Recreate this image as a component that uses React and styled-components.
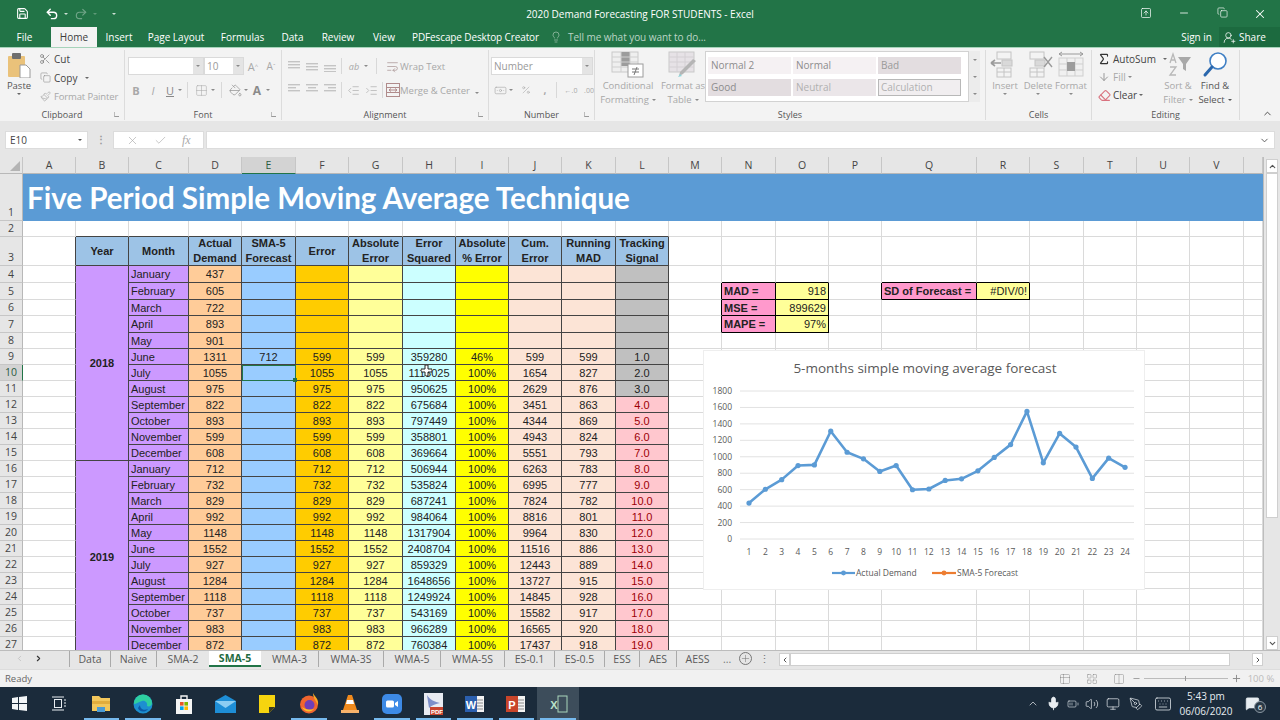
import React from 'react';
import styled, { createGlobalStyle } from 'styled-components';
import {
  Save, Undo2, Redo2, Minus, X, Copy, SquareArrowUp, Lightbulb, UserRoundPlus, Scissors, Paintbrush,
  PaintBucket, Grid2x2, WrapText, Percent, Check, ChevronUp, ChevronDown, Mic, BatteryMedium, Volume2,
  Monitor, PenTool, Keyboard, Plus, ChevronLeft, ChevronRight, Sigma, ArrowDown, Eraser, IndentIncrease,
  IndentDecrease, Banknote, MessageSquare, Table2, LayoutGrid, Columns2,
} from 'lucide-react';

const GlobalStyle = createGlobalStyle`
  html, body { margin: 0; padding: 0; background: #e6e6e6; }
  * { box-sizing: border-box; }
`;

const uiFont = `"Open Sans", "Noto Sans", sans-serif`;
const cellFont = `"Liberation Sans", Arial, sans-serif`;
const green = '#227447';
const faded = '#a8a8a8';

const Page = styled.div`
  width: 1280px;
  height: 720px;
  overflow: hidden;
  display: flex;
  flex-direction: column;
  font-family: ${uiFont};
  font-size: 10px;
  color: #444;
`;

/* title bar */
const TitleBar = styled.div`
  height: 27px;
  flex: none;
  background: ${green};
  color: #fff;
  display: grid;
  grid-template-columns: 1fr auto 1fr;
  align-items: center;
  font-size: 10px;
`;
const Qat = styled.div`
  display: flex;
  align-items: center;
  padding-left: 15px;
`;
const QatSlot = styled.span`
  width: ${p => p.$w}px;
  display: flex;
  justify-content: center;
  align-items: center;
  opacity: ${p => (p.$off ? 0.35 : 1)};
`;
const WindowBtns = styled.div`
  display: flex;
  justify-content: flex-end;
  padding-right: 1px;
`;
const WinBtn = styled.span`
  width: 38px;
  display: flex;
  justify-content: center;
`;
const Caret = styled.i`
  display: inline-block;
  flex: none;
  width: 0;
  height: 0;
  border-left: 2px solid transparent;
  border-right: 2px solid transparent;
  border-top: 2px solid ${p => p.$c || '#8a8a8a'};
`;

/* tabs */
const TabRow = styled.div`
  height: 20px;
  flex: none;
  background: ${green};
  color: #fff;
  display: flex;
  padding-left: 8px;
  gap: 10px;
  position: relative;
`;
const MenuTab = styled.div`
  width: ${p => p.$w}px;
  display: flex;
  align-items: center;
  justify-content: center;
  white-space: nowrap;
  font-size: 10px;
  letter-spacing: ${p => (p.$w > 100 ? '-0.12px' : '0')};
  background: ${p => (p.$on ? '#f3f3f3' : 'transparent')};
  color: ${p => (p.$on ? '#3c3c3c' : '#fff')};
`;
const TellMe = styled.div`
  display: flex;
  align-items: center;
  gap: 6px;
  margin-left: 2px;
  letter-spacing: -0.05px;
  color: #bcd5c6;
  white-space: nowrap;
`;
const Account = styled.div`
  margin-left: auto;
  display: flex;
  align-items: center;
  white-space: nowrap;
`;
const ShareBtn = styled.div`
  width: 61px;
  height: 100%;
  margin-left: 7px;
  background: #1c6a3f;
  display: flex;
  align-items: center;
  gap: 3px;
  padding-left: 4px;
`;

/* ribbon */
const Ribbon = styled.div`
  height: 74px;
  flex: none;
  display: flex;
  background: #f3f3f3;
  border-top: 1px solid #a6d3ba;
  font-size: 9.5px;
`;
const Group = styled.div`
  width: ${p => p.$w}px;
  flex: none;
  position: relative;
  display: flex;
  flex-direction: column;
  border-right: 1px solid #dcdcdc;
  margin: 2px 0 1px;
`;
const GroupBody = styled.div`
  flex: 1;
  display: flex;
  flex-direction: ${p => (p.$col ? 'column' : 'row')};
  gap: ${p => p.$gap || 0}px;
  padding: ${p => p.$pt || 0}px 0 0 ${p => p.$pl || 0}px;
`;
const GroupLabel = styled.div`
  height: 13px;
  text-align: center;
  font-size: 9px;
  line-height: 16px;
  color: #555;
`;
const Launcher = styled.i`
  position: absolute;
  right: 5px;
  bottom: 3px;
  width: 5px;
  height: 5px;
  border-left: 1px solid #bbb;
  border-bottom: 1px solid #999;
`;
const PasteBtn = styled.div`
  width: 38px;
  flex: none;
  display: flex;
  flex-direction: column;
  align-items: center;
  font-size: 9.5px;
  color: #555;
  line-height: 13px;
  gap: 1px;
  padding-top: 1px;
`;
const ClipList = styled.div`
  display: flex;
  flex-direction: column;
  margin-top: -1px;
`;
const ClipRow = styled.div`
  height: 18.5px;
  display: flex;
  align-items: center;
  gap: 2px;
  white-space: nowrap;
  color: ${p => (p.$off ? faded : '#444')};
  font-size: ${p => (p.$off ? 9.5 : 10)}px;
  letter-spacing: ${p => (p.$off ? '-0.15px' : '0')};
`;
const IconBox = styled.span`
  width: ${p => p.$w || 14}px;
  flex: none;
  display: flex;
  align-items: center;
  justify-content: center;
  color: ${p => p.$c || faded};
  font-weight: ${p => (p.$bold ? 700 : 400)};
  font-style: ${p => (p.$it ? 'italic' : 'normal')};
  text-decoration: ${p => (p.$un ? 'underline' : 'none')};
  font-size: ${p => p.$fs || 11}px;
`;
const ToolRow = styled.div`
  height: 18px;
  display: flex;
  align-items: center;
`;
const Combo = styled.div`
  width: ${p => p.$w}px;
  height: 18px;
  flex: none;
  background: #fff;
  border: 1px solid #dadada;
  display: flex;
  align-items: center;
  justify-content: space-between;
  padding-left: 2px;
  color: #999;
  font-size: 10px;
  & > span {
    width: 10px;
    height: 100%;
    background: #e4e4e4;
    display: flex;
    align-items: center;
    justify-content: center;
  }
`;
const Divider = styled.i`
  width: 1px;
  height: 16px;
  flex: none;
  background: #d8d8d8;
  margin: 0 ${p => p.$m || 3}px;
`;
const FadedText = styled.span`
  color: ${faded};
  white-space: nowrap;
  margin-left: ${p => p.$ml || 0}px;
  font-size: 9.5px;
`;
const BigBtn = styled.div`
  width: ${p => p.$w}px;
  flex: none;
  display: flex;
  flex-direction: column;
  align-items: center;
  white-space: nowrap;
  line-height: 14px;
  padding-top: 1px;
  color: ${p => (p.$dark ? '#555' : faded)};
  & > svg { height: 27px; margin-bottom: 1px; flex: none; }
  & > span { display: flex; align-items: center; gap: 3px; }
`;
const Gallery = styled.div`
  width: 264px;
  height: 51px;
  flex: none;
  margin-top: 1px;
  background: #fff;
  border: 1px solid #d2d2d2;
  padding: 5px 2px;
  display: grid;
  grid-template-columns: repeat(3, 83px);
  grid-template-rows: 17px 17px;
  gap: 5px 2px;
`;
const StyleCell = styled.div`
  background: ${p => p.$bg};
  color: ${p => p.$c || '#9a9a9a'};
  border: 1px solid ${p => p.$line || p.$bg};
  font-size: 10px;
  padding-left: 2px;
  line-height: 15px;
`;
const GalleryScroll = styled.div`
  width: 11px;
  height: 51px;
  margin-top: 1px;
  flex: none;
  display: flex;
  flex-direction: column;
  justify-content: space-around;
  align-items: center;
  background: #ececec;
`;
const EditList = styled.div`
  width: 68px;
  padding: 0 0 0 5px;
  flex: none;
  display: flex;
  flex-direction: column;
`;
const EditRow = styled.div`
  height: 18px;
  display: flex;
  align-items: center;
  gap: 2px;
  white-space: nowrap;
  font-size: 10px;
  color: ${p => (p.$off ? faded : '#444')};
`;
const RibbonEnd = styled.div`
  flex: 1;
  display: flex;
  align-items: flex-end;
  justify-content: flex-start;
  padding: 0 0 2px 22px;
`;

/* formula bar */
const FormulaBar = styled.div`
  height: 36px;
  flex: none;
  background: #e6e6e6;
  display: flex;
  padding: 10px 5px 8px;
`;
const NameBox = styled.div`
  width: 83px;
  background: #fff;
  border: 1px solid #dcdcdc;
  display: flex;
  align-items: center;
  justify-content: space-between;
  padding: 0 5px 0 4px;
  font-size: 10px;
  color: #444;
`;
const Dots = styled.div`
  width: 25px;
  text-align: center;
  color: #999;
  line-height: 16px;
  font-weight: 700;
`;
const FxBox = styled.div`
  width: 91px;
  background: #fff;
  border: 1px solid #dcdcdc;
  display: flex;
  align-items: center;
  justify-content: space-around;
  padding: 0 5px;
  color: #aaa;
  font-family: "Liberation Serif", serif;
  font-style: italic;
  font-size: 12px;
`;
const FormulaInput = styled.div`
  flex: 1;
  margin-left: 2px;
  background: #fff;
  border: 1px solid #dcdcdc;
  display: flex;
  align-items: center;
  justify-content: flex-end;
  padding-right: 4px;
`;

/* sheet */
const SheetArea = styled.div`
  height: 493px;
  flex: none;
  display: flex;
  position: relative;
  overflow: hidden;
  background: #fff;
`;
const Grid = styled.div`
  width: 1263px;
  flex: none;
  display: grid;
  grid-template-columns: ${p => p.$cols};
  grid-template-rows: ${p => p.$rows};
  font-family: ${cellFont};
  font-size: 11px;
  color: #222;
`;
const ColHead = styled.div`
  background: ${p => (p.$on ? '#d3d3d3' : '#e6e6e6')};
  border-right: 1px solid #c6c6c6;
  border-bottom: 1px solid ${p => (p.$on ? green : '#b8b8b8')};
  text-align: center;
  line-height: 17px;
  font-family: ${uiFont};
  font-size: 10.5px;
  color: ${p => (p.$on ? '#2a5a40' : '#444')};
`;
const RowHead = styled.div`
  background: ${p => (p.$on ? '#d3d3d3' : '#e6e6e6')};
  border-right: 1px solid ${p => (p.$on ? green : '#b8b8b8')};
  border-bottom: 1px solid #c6c6c6;
  display: flex;
  align-items: flex-end;
  justify-content: center;
  font-family: ${uiFont};
  font-size: 10.5px;
  line-height: 15px;
  color: ${p => (p.$on ? '#2a5a40' : '#444')};
`;
const Corner = styled.div`
  background: #e6e6e6;
  border-right: 1px solid #c6c6c6;
  border-bottom: 1px solid #b8b8b8;
  position: relative;
  &::after {
    content: '';
    position: absolute;
    right: 2px;
    bottom: 2px;
    border-left: 10px solid transparent;
    border-bottom: 10px solid #b4b4b4;
  }
`;
const TitleCell = styled.div`
  grid-column: 2 / -1;
  background: #5b9bd5;
  color: #fff;
  font-family: Lato, "Open Sans", sans-serif;
  font-weight: 700;
  font-size: 29.5px;
  line-height: 47px;
  padding-left: 4px;
  white-space: nowrap;
`;
const Cell = styled.div`
  grid-row: ${p => (p.$span ? `span ${p.$span}` : 'auto')};
  background: ${p => p.$bg || '#fff'};
  color: ${p => p.$c || '#222'};
  font-weight: ${p => (p.$bold ? 700 : 400)};
  text-align: ${p => p.$align || 'center'};
  padding: 0 2px;
  white-space: pre-line;
  display: flex;
  flex-direction: column;
  justify-content: center;
  line-height: ${p => (p.$tall ? '15px' : '14px')};
  border-right: 1px solid ${p => p.$rb || '#dadada'};
  border-bottom: 1px solid ${p => p.$bb || '#dadada'};
  position: relative;
  outline: ${p => (p.$sel ? `1px solid ${green}` : 'none')};
  outline-offset: -1px;
  &::after {
    content: '';
    display: ${p => (p.$sel ? 'block' : 'none')};
    position: absolute;
    right: -2px;
    bottom: -2px;
    width: 4px;
    height: 4px;
    background: ${green};
    z-index: 2;
  }
`;
const CrossCursor = styled.svg`
  position: absolute;
  left: 421px;
  top: 208px;
  z-index: 3;
`;
const VScroll = styled.div`
  flex: 1;
  background: #e6e6e6;
  display: flex;
  flex-direction: column;
  padding: 2px 2px 0;
  border-left: 1px solid #bdbdbd;
`;
const ScrollBtn = styled.div`
  height: 14px;
  flex: none;
  background: #fff;
  border: 1px solid #cfcfcf;
  color: #555;
  display: flex;
  align-items: center;
  justify-content: center;
`;
const VThumb = styled.div`
  height: 345px;
  flex: none;
  background: #fff;
  border: 1px solid #cfcfcf;
`;
const Spacer = styled.div`
  flex: 1;
`;
const ChartBox = styled.div`
  position: absolute;
  left: 703px;
  top: 193px;
  width: 442px;
  height: 240px;
  background: #fff;
  border: 1px solid #eeeeee;
  z-index: 2;
  & text { font-family: ${uiFont}; fill: #595959; }
`;

/* sheet tabs + status */
const SheetTabs = styled.div`
  height: 19px;
  flex: none;
  background: #e6e6e6;
  border-top: 1px solid #bcbcbc;
  display: flex;
  font-size: 10.5px;
  color: #5a5a5a;
`;
const TabNav = styled.div`
  width: 69px;
  flex: none;
  display: flex;
  align-items: center;
  padding: 0 0 3px 15px;
  gap: 10px;
`;
const SheetTab = styled.div`
  width: ${p => p.$w}px;
  height: 16px;
  flex: none;
  display: flex;
  align-items: center;
  justify-content: center;
  white-space: nowrap;
  border-left: ${p => (p.$sep ? '1px solid #aaa' : 'none')};
  background: ${p => (p.$on ? '#fff' : 'transparent')};
  color: ${p => (p.$on ? '#1f6b41' : 'inherit')};
  font-weight: ${p => (p.$on ? 700 : 400)};
  border-bottom: ${p => (p.$on ? `2px solid ${green}` : 'none')};
`;
const TabTools = styled.div`
  width: 61px;
  flex: none;
  display: flex;
  align-items: center;
  justify-content: space-between;
  padding: 0 9px 3px 5px;
  color: #777;
  & > svg {
    border: 1px solid #777;
    border-radius: 50%;
  }
`;
const HScroll = styled.div`
  flex: 1;
  display: flex;
  align-items: stretch;
  padding: 2px 17px 3px 0;
  & > * { flex: none; }
`;
const HBtn = styled.div`
  width: 11px;
  background: #fff;
  border: 1px solid #cfcfcf;
  display: flex;
  align-items: center;
  justify-content: center;
  color: #555;
`;
const HThumb = styled.div`
  width: 440px;
  background: #fff;
  border: 1px solid #cfcfcf;
  margin-right: auto;
`;
const StatusBar = styled.div`
  height: 18px;
  flex: none;
  background: #f1f1f1;
  border-top: 1px solid #dcdcdc;
  display: flex;
  align-items: center;
  padding-left: 5px;
  font-size: 9.5px;
  color: #666;
`;
const StatusRight = styled.div`
  margin-left: auto;
  display: flex;
  align-items: center;
  color: #888;
`;
const ViewIcon = styled.span`
  width: 27px;
  display: flex;
  justify-content: center;
`;
const ZoomTrack = styled.div`
  width: 84px;
  height: 1px;
  margin: 0 3px;
  background: #bbb;
  position: relative;
  &::after {
    content: '';
    position: absolute;
    left: 41px;
    top: -2px;
    width: 1px;
    height: 5px;
    background: #999;
  }
`;
const ZoomLabel = styled.span`
  width: 38px;
  text-align: center;
  color: #bbb;
`;

/* taskbar */
const Taskbar = styled.div`
  flex: 1;
  background: #1b2b3b;
  display: flex;
  align-items: stretch;
  color: #e8edf1;
`;
const TaskSlot = styled.div`
  width: ${p => p.$w || 41.5}px;
  flex: none;
  display: flex;
  align-items: center;
  justify-content: center;
  position: relative;
  background: ${p => (p.$active ? '#3d4d5b' : 'transparent')};
  &::after {
    content: '';
    display: ${p => (p.$open ? 'block' : 'none')};
    position: absolute;
    left: 3px;
    right: 3px;
    bottom: 0;
    height: 2px;
    background: #76b9ed;
  }
`;
const Tray = styled.div`
  margin-left: auto;
  display: flex;
  align-items: center;
  padding-right: 13px;
`;
const TraySlot = styled.span`
  width: ${p => p.$w}px;
  flex: none;
  display: flex;
  justify-content: center;
`;
const Clock = styled.div`
  width: 62px;
  text-align: center;
  font-size: 10px;
  line-height: 15px;
`;
const Notify = styled.div`
  width: 30px;
  display: flex;
  justify-content: center;
  position: relative;
`;
const NotifyBadge = styled.span`
  position: absolute;
  left: 17px;
  top: 5px;
  width: 12px;
  height: 12px;
  border-radius: 50%;
  background: #2a3a48;
  border: 1px solid #8b98a3;
  font-size: 8px;
  line-height: 10px;
  text-align: center;
  color: #fff;
`;

/* drawings */
const PasteIcon = () => (
  <svg width="24" height="26" viewBox="0 0 24 26">
    <rect x="1" y="4" width="17" height="21" rx="1" fill="#eac27a" />
    <rect x="5" y="1" width="9" height="6" rx="1" fill="#6f6f6f" />
    <path d="M13 13h6l4 4v9H13z" fill="#fff" stroke="#9a9a9a" />
  </svg>
);
const LinesIcon = ({ top = 0, align = 'left' }) => {
  const rows = [0, 1, 2];
  return (
    <svg width="14" height="12" viewBox="0 0 14 12">
      {rows.map(i => {
        const w = i === 1 ? 8 : 12;
        const x = align === 'left' ? 1 : align === 'center' ? 7 - w / 2 : 13 - w;
        return <rect key={i} x={top ? 1 : x} y={top + i * 3} width={top ? 12 : w} height="1.4" fill="#c4c4c4" />;
      })}
    </svg>
  );
};
const MergeIcon = () => (
  <svg width="14" height="14" viewBox="0 0 14 14" fill="none" stroke="#b08b8b">
    <rect x="0.5" y="0.5" width="13" height="13" />
    <path d="M0 4.5h14M0 9.5h14M3 7h8M3 7l2-1.5M3 7l2 1.5M11 7L9 5.5M11 7L9 8.5" />
  </svg>
);
const CondIcon = () => (
  <svg width="36" height="27" viewBox="0 0 36 27" fill="none">
    <rect x="2" y="1" width="26" height="20" fill="#efefef" stroke="#c9c9c9" />
    <rect x="11" y="1" width="9" height="14" fill="#9c9c9c" />
    <path d="M2 6h26M2 11h26M2 16h26M11 1v20M20 1v20" stroke="#cfcfcf" />
    <rect x="18" y="13" width="15" height="13" fill="#fff" stroke="#9c9c9c" />
    <path d="M22 18h7M22 21h7M27 16l-3 8" stroke="#777" />
  </svg>
);
const TableIcon = () => (
  <svg width="30" height="27" viewBox="0 0 30 27" fill="none">
    <rect x="1" y="1" width="25" height="20" fill="#e6e2e6" stroke="#c9c9c9" />
    <path d="M1 6h25M1 11h25M1 16h25M9 1v20M17 1v20" stroke="#d4d0d4" />
    <path d="M28 10L15 23l-4 2 1-4L25 8z" fill="#b5b5b5" />
    <path d="M12 23l-2 3 4-1z" fill="#8fd3d8" />
  </svg>
);
const InsertIcon = ({ kind }) => (
  <svg width="32" height="27" viewBox="0 0 32 27" fill="none" stroke="#c4c4c4">
    <rect x="8" y="1" width="14" height="7" />
    <rect x="8" y="17" width="14" height="9" />
    <path d="M15 17v9M8 21h14" />
    <rect x="13" y="9" width="10" height="6" fill="#d9d9d9" />
    {kind === 'insert'
      ? <path d="M2 12h10M2 12l4-3M2 12l4 3" stroke="#9b9b9b" strokeWidth="1.6" />
      : <path d="M22 6l8 10M30 6l-8 10" stroke="#9b9b9b" strokeWidth="1.4" />}
  </svg>
);
const FormatIcon = () => (
  <svg width="30" height="27" viewBox="0 0 30 27" fill="none" stroke="#cfcfcf">
    <path d="M3 3h24M3 3l3-2M3 3l3 2M27 3l-3-2M27 3l-3 2" stroke="#999" />
    <rect x="3" y="7" width="24" height="18" fill="#f0f0f0" />
    <path d="M3 13h24M3 19h24M11 7v18M19 7v18" />
    <rect x="11" y="11" width="8" height="9" fill="#9c9c9c" stroke="none" />
  </svg>
);
const SortIcon = () => (
  <svg width="30" height="27" viewBox="0 0 30 27" fill="none">
    <path d="M7 12l3-9 3 9M8 9h4M7 16h6l-6 8h6" stroke="#b8b8b8" strokeWidth="1.3" />
    <path d="M15 6h13l-5 7v7l-3-2v-5z" fill="#a9a9a9" />
  </svg>
);
const FindIcon = () => (
  <svg width="26" height="27" viewBox="0 0 26 27" fill="none">
    <circle cx="16" cy="10" r="8" stroke="#3f7fc4" strokeWidth="1.6" fill="#fff" />
    <path d="M10 16L3 24" stroke="#2a67ad" strokeWidth="3" strokeLinecap="round" />
  </svg>
);
const WinLogo = () => (
  <svg width="15" height="15" viewBox="0 0 15 15" fill="#f2f5f7">
    <path d="M0 2l6-1v6H0zM7 1l8-1v7H7zM0 8h6v6l-6-1zM7 8h8v7l-8-1z" />
  </svg>
);
const TaskView = () => (
  <svg width="15" height="15" viewBox="0 0 15 15" fill="none" stroke="#e8edf1">
    <rect x="2.5" y="3.5" width="7" height="8" />
    <path d="M0 1h12M0 14h12M12 4h2M12 7h2M12 10h2" />
  </svg>
);
const Folder = () => (
  <svg width="20" height="18" viewBox="0 0 20 18">
    <path d="M1 1h7l2 2h9v13H1z" fill="#f2c75c" />
    <path d="M1 6h18v3H1z" fill="#e2ad3d" />
    <path d="M6 12h8v5H6z" fill="#4b9bd5" />
  </svg>
);
const Edge = () => (
  <svg width="20" height="20" viewBox="0 0 20 20">
    <circle cx="10" cy="10" r="9.5" fill="#1d8fd0" />
    <path d="M1 10a9 9 0 0 1 18-1c0 3-3 4-5 3 1-3-2-6-5-5-4 1-6 3-8 3z" fill="#2ecfa0" />
    <path d="M7 11c0 4 4 6 8 4-3 4-9 3-10-1z" fill="#0c5aa6" />
  </svg>
);
const Store = () => (
  <svg width="20" height="20" viewBox="0 0 20 20">
    <path d="M2 5h16v15H2z" fill="#f5f5f5" />
    <path d="M7 5V2h6v3" fill="none" stroke="#f5f5f5" strokeWidth="1.4" />
    <rect x="6" y="8" width="3.6" height="3.6" fill="#e8572a" />
    <rect x="10.4" y="8" width="3.6" height="3.6" fill="#7fba00" />
    <rect x="6" y="12.4" width="3.6" height="3.6" fill="#00a4ef" />
    <rect x="10.4" y="12.4" width="3.6" height="3.6" fill="#ffb900" />
  </svg>
);
const Mail = () => (
  <svg width="21" height="18" viewBox="0 0 21 18">
    <path d="M0 6L10.5 0 21 6v12H0z" fill="#1e8ed6" />
    <path d="M0 6l10.5 7L21 6" fill="#8ccdf2" />
  </svg>
);
const Sticky = () => (
  <svg width="16" height="18" viewBox="0 0 16 18">
    <path d="M0 0h16v12l-6 6H0z" fill="#f6d40f" />
    <path d="M10 18v-6h6z" fill="#3a3a20" />
  </svg>
);
const Firefox = () => (
  <svg width="20" height="21" viewBox="0 0 20 21">
    <circle cx="10" cy="11.5" r="9" fill="#f0652f" />
    <circle cx="10.5" cy="12" r="5" fill="#6e3fb8" />
    <path d="M14 0c2 4 6 6 5 12-2-4-5-7-5-12z" fill="#f9a825" />
    <path d="M3 14c2 5 9 6 12 2-3 1-8 1-12-2z" fill="#f9c02e" />
  </svg>
);
const Vlc = () => (
  <svg width="18" height="20" viewBox="0 0 18 20">
    <path d="M7 1h4l5 15H2z" fill="#f08a1d" />
    <path d="M6 6h6l1 4H5z" fill="#fff" />
    <path d="M0 16h18v3H0z" fill="#f6b26b" />
  </svg>
);
const ZoomApp = () => (
  <svg width="20" height="20" viewBox="0 0 20 20">
    <rect width="20" height="20" rx="5" fill="#3d8ae6" />
    <rect x="4" y="6.5" width="8" height="7" rx="1.5" fill="#fff" />
    <path d="M13 9l3-2v6l-3-2z" fill="#fff" />
  </svg>
);
const PdfApp = () => (
  <svg width="19" height="22" viewBox="0 0 19 22">
    <rect width="19" height="22" fill="#e8ebf2" />
    <path d="M3 2c3 5 8 7 13 8-4 1-8 2-11 5z" fill="#7d8fc9" />
    <rect x="6" y="14" width="13" height="8" fill="#c9452f" />
    <text x="7" y="20.5" fontSize="6" fontWeight="700" fill="#fff" fontFamily="Liberation Sans">PDF</text>
  </svg>
);
const OfficeApp = ({ bg, letter }) => (
  <svg width="20" height="20" viewBox="0 0 20 20">
    <rect x="10" y="2" width="9" height="16" fill={bg === 'none' ? 'none' : '#f3f3f3'} stroke={bg === 'none' ? '#a9d6bb' : 'none'} />
    <path d="M12 6h6M12 9h6M12 12h6M12 15h6" stroke={bg === 'none' ? 'none' : '#8a8a8a'} />
    {bg !== 'none' && <rect x="0" y="2" width="12" height="16" fill={bg} />}
    <text x="6" y="14.5" textAnchor="middle" fontSize="11" fontWeight="700" fill={bg === 'none' ? '#b9e3c9' : '#fff'} fontFamily="Liberation Sans">{letter}</text>
  </svg>
);

/* sheet data */
const colWidths = [23, 53, 53, 60, 53, 54, 53, 54, 53, 53, 53, 54, 53, 53, 54, 53, 53, 95, 53, 54, 53, 53, 54, 19];
const letters = 'ABCDEFGHIJKLMNOPQRSTUVW'.split('');
const rowHeights = [17, 47, 16, 29, 17, 17, 16, 17, 16, ...Array(19).fill(16)];
const lineDark = '#444';
const lineBlack = '#000';

const firstMonths = [['January', 437], ['February', 605], ['March', 722], ['April', 893], ['May', 901]];
// month, demand, squared, cum, mad, signal (error = demand from row 10 on)
const dataRows = [
  ['June', 1311, 359280, 599, 599, '1.0'],
  ['July', 1055, 1113025, 1654, 827, '2.0'],
  ['August', 975, 950625, 2629, 876, '3.0'],
  ['September', 822, 675684, 3451, 863, '4.0'],
  ['October', 893, 797449, 4344, 869, '5.0'],
  ['November', 599, 358801, 4943, 824, '6.0'],
  ['December', 608, 369664, 5551, 793, '7.0'],
  ['January', 712, 506944, 6263, 783, '8.0'],
  ['February', 732, 535824, 6995, 777, '9.0'],
  ['March', 829, 687241, 7824, 782, '10.0'],
  ['April', 992, 984064, 8816, 801, '11.0'],
  ['May', 1148, 1317904, 9964, 830, '12.0'],
  ['June', 1552, 2408704, 11516, 886, '13.0'],
  ['July', 927, 859329, 12443, 889, '14.0'],
  ['August', 1284, 1648656, 13727, 915, '15.0'],
  ['September', 1118, 1249924, 14845, 928, '16.0'],
  ['October', 737, 543169, 15582, 917, '17.0'],
  ['November', 983, 966289, 16565, 920, '18.0'],
  ['December', 872, 760384, 17437, 918, '19.0'],
];
const headers = {
  B: 'Year', C: 'Month', D: 'Actual\nDemand', E: 'SMA-5\nForecast', F: 'Error', G: 'Absolute\nError',
  H: 'Error\nSquared', I: 'Absolute\n% Error', J: 'Cum.\nError', K: 'Running\nMAD', L: 'Tracking\nSignal',
};
const tones = {
  C: '#cc99ff', D: '#ffcc99', E: '#99ccff', F: '#ffcc00', G: '#ffff99', H: '#ccffff', I: '#ffff00', J: '#fce4d6', K: '#fce4d6', L: '#c0c0c0',
};
const tableCols = 'BCDEFGHIJKL';
const statCells = {
  N5: ['MAD =', 'l'], O5: ['918', 'r'], N6: ['MSE =', 'l'], O6: ['899629', 'r'], N7: ['MAPE =', 'l'], O7: ['97%', 'r'],
  Q5: ['SD of Forecast =', 'l'], R5: ['#DIV/0!', 'r'],
};

function cellValue(col, row) {
  if (row < 4) return '';
  if (row <= 8) {
    const m = firstMonths[row - 4];
    return col === 'C' ? m[0] : col === 'D' ? m[1] : '';
  }
  const [month, demand, squared, cum, mad, signal] = dataRows[row - 9];
  const first = row === 9;
  switch (col) {
    case 'C': return month;
    case 'D': return demand;
    case 'E': return first ? 712 : '';
    case 'F':
    case 'G': return first ? 599 : demand;
    case 'H': return squared;
    case 'I': return first ? '46%' : '100%';
    case 'J': return cum;
    case 'K': return mad;
    case 'L': return signal;
    default: return '';
  }
}

function SheetCell({ col, row }) {
  const key = col + row;
  if (col === 'B' && row >= 4) {
    if (row !== 4 && row !== 16) return null;
    return (
      <Cell $span={12} $bg="#cc99ff" $bold $rb={lineDark} $bb={lineDark}>
        {row === 4 ? 2018 : 2019}
      </Cell>
    );
  }
  if (row === 3 && headers[col]) {
    return <Cell $bg="#9dc3e6" $bold $tall $rb={lineDark} $bb={lineDark}>{headers[col]}</Cell>;
  }
  if (row >= 4 && tableCols.includes(col)) {
    const red = col === 'L' && row >= 12;
    return (
      <Cell
        $bg={red ? '#ffc7ce' : tones[col]}
        $c={red ? '#9c0006' : undefined}
        $align={col === 'C' ? 'left' : 'center'}
        $rb={lineDark}
        $bb={lineDark}
        $sel={key === 'E10'}
      >
        {cellValue(col, row)}
      </Cell>
    );
  }
  if (statCells[key]) {
    const [text, side] = statCells[key];
    return (
      <Cell
        $bg={side === 'l' ? '#ff99cc' : '#ffff99'}
        $bold={side === 'l'}
        $align={side === 'l' ? 'left' : 'right'}
        $rb={lineBlack}
        $bb={lineBlack}
      >
        {text}
      </Cell>
    );
  }
  // neighbours carry the dark edge of a table
  const edgeRight = (col === 'A' && row >= 3) || (row >= 5 && row <= 7 && col === 'M') || (row === 5 && col === 'P');
  const edgeBottom = (row === 2 && tableCols.includes(col)) || (row === 4 && 'NOQR'.includes(col));
  return <Cell $rb={edgeRight ? (col === 'A' ? lineDark : lineBlack) : undefined} $bb={edgeBottom ? (row === 2 ? lineDark : lineBlack) : undefined} />;
}

const demand = [437, 605, 722, 893, 901, 1311, 1055, 975, 822, 893, 599, 608, 712, 732, 829, 992, 1148, 1552, 927, 1284, 1118, 737, 983, 872];
const px = i => 45 + i * 16.35;
const py = v => 188 - (v * 148) / 1800;

function Chart() {
  const pts = demand.map((v, i) => `${px(i)},${py(v)}`).join(' ');
  return (
    <ChartBox>
      <svg width="440" height="238" viewBox="0 0 440 238">
        <text x="221" y="22" textAnchor="middle" fontSize="13.5">5-months simple moving average forecast</text>
        {[0, 200, 400, 600, 800, 1000, 1200, 1400, 1600, 1800].map(v => (
          <g key={v}>
            <line x1="36" x2="430" y1={py(v)} y2={py(v)} stroke="#e2e2e2" />
            <text x="28" y={py(v) + 3} textAnchor="end" fontSize="8.5">{v}</text>
          </g>
        ))}
        {demand.map((_, i) => (
          <text key={i} x={px(i)} y="204" textAnchor="middle" fontSize="8.5">{i + 1}</text>
        ))}
        <polyline points={pts} fill="none" stroke="#5b9bd5" strokeWidth="2.6" strokeLinejoin="round" />
        {demand.map((v, i) => <circle key={i} cx={px(i)} cy={py(v)} r="2.6" fill="#5b9bd5" />)}
        <line x1="128" x2="151" y1="222" y2="222" stroke="#5b9bd5" strokeWidth="2.2" />
        <circle cx="139.5" cy="222" r="2.4" fill="#5b9bd5" />
        <text x="152" y="225" fontSize="8.5">Actual Demand</text>
        <line x1="228" x2="252" y1="222" y2="222" stroke="#ed7d31" strokeWidth="2.2" />
        <circle cx="240" cy="222" r="2.4" fill="#ed7d31" />
        <text x="253" y="225" fontSize="8.5">SMA-5 Forecast</text>
      </svg>
    </ChartBox>
  );
}

function Sheet() {
  const rows = rowHeights.slice(1).map((_, i) => i + 1);
  return (
    <SheetArea>
      <Grid
        $cols={colWidths.map(w => `${w}px`).join(' ')}
        $rows={rowHeights.map(h => `${h}px`).join(' ')}
      >
        <Corner />
        {letters.map(l => <ColHead key={l} $on={l === 'E'}>{l !== 'W' ? l : ''}</ColHead>)}
        {rows.map(row => (
          <React.Fragment key={row}>
            <RowHead $on={row === 10}>{row}</RowHead>
            {row === 1
              ? <TitleCell>Five Period Simple Moving Average Technique</TitleCell>
              : letters.map(col => <SheetCell key={col} col={col} row={row} />)}
          </React.Fragment>
        ))}
      </Grid>
      <VScroll>
        <ScrollBtn><ChevronUp size={9} strokeWidth={3} /></ScrollBtn>
        <VThumb />
        <Spacer />
        <ScrollBtn><ChevronDown size={9} strokeWidth={3} /></ScrollBtn>
      </VScroll>
      <Chart />
      <CrossCursor width="11" height="11" viewBox="0 0 11 11">
        <path d="M4 0h3v4h4v3H7v4H4V7H0V4h4z" fill="#fff" stroke="#222" />
      </CrossCursor>
    </SheetArea>
  );
}

const menuTabs = [
  ['File', 33], ['Home', 46, true], ['Insert', 24], ['Page Layout', 70], ['Formulas', 43],
  ['Data', 37], ['Review', 34], ['View', 38], ['PDFescape Desktop Creator', 125],
];
const sheetTabs = [
  ['Data', 41], ['Naive', 46], ['SMA-2', 53], ['SMA-5', 52, true], ['WMA-3', 57], ['WMA-3S', 65], ['WMA-5', 57],
  ['WMA-5S', 64], ['ES-0.1', 50], ['ES-0.5', 50], ['ESS', 35], ['AES', 37], ['AESS', 42],
];

function Clipboard() {
  return (
    <Group $w={125}>
      <GroupBody $pt={1}>
        <PasteBtn>
          <PasteIcon />
          Paste
          <Caret $c="#666" />
        </PasteBtn>
        <ClipList>
          <ClipRow><IconBox $c="#666"><Scissors size={12} strokeWidth={1.2} /></IconBox>Cut</ClipRow>
          <ClipRow><IconBox $c="#888"><Copy size={11} strokeWidth={1.2} /></IconBox>Copy&nbsp;&nbsp;<Caret $c="#666" /></ClipRow>
          <ClipRow $off><IconBox $c="#bbb"><Paintbrush size={11} /></IconBox>Format Painter</ClipRow>
        </ClipList>
      </GroupBody>
      <GroupLabel>Clipboard</GroupLabel>
      <Launcher />
    </Group>
  );
}

function FontGroup() {
  return (
    <Group $w={157}>
      <GroupBody $col $pt={7} $pl={3} $gap={6}>
        <ToolRow>
          <Combo $w={76}><b /><span><Caret /></span></Combo>
          <Combo $w={40}>10<span><Caret /></span></Combo>
          <IconBox $w={18} $fs={11}>A<sup style={{ fontSize: 6 }}>^</sup></IconBox>
          <IconBox $w={18} $fs={10}>A<sup style={{ fontSize: 6 }}>ˇ</sup></IconBox>
        </ToolRow>
        <ToolRow>
          <IconBox $w={16} $bold>B</IconBox>
          <IconBox $w={18} $it $fs={11}>I</IconBox>
          <IconBox $w={16} $un $c="#888">U</IconBox>
          <Caret />
          <Divider $m={5} />
          <IconBox $w={16}><Grid2x2 size={13} strokeWidth={1} /></IconBox>
          <IconBox $w={8}><Caret /></IconBox>
          <Divider $m={4} />
          <IconBox $w={18} $c="#888"><PaintBucket size={13} strokeWidth={1.2} /></IconBox>
          <Caret />
          <IconBox $w={18} $c="#8a8a8a" $bold $fs={12}>A</IconBox>
          <Caret />
        </ToolRow>
      </GroupBody>
      <GroupLabel>Font</GroupLabel>
      <Launcher />
    </Group>
  );
}

function Alignment() {
  return (
    <Group $w={207}>
      <GroupBody $col $pt={7} $pl={3} $gap={6}>
        <ToolRow>
          <IconBox $w={18}><LinesIcon top={1} /></IconBox>
          <IconBox $w={18}><LinesIcon top={3} /></IconBox>
          <IconBox $w={18}><LinesIcon top={5} /></IconBox>
          <Divider $m={2} />
          <IconBox $w={20} $fs={9} $it>ab</IconBox>
          <Caret />
          <Divider $m={8} />
          <IconBox $w={15} $c="#a08a8a"><WrapText size={13} strokeWidth={1.2} /></IconBox>
          <FadedText>Wrap Text</FadedText>
        </ToolRow>
        <ToolRow>
          <IconBox $w={18}><LinesIcon align="left" /></IconBox>
          <IconBox $w={18}><LinesIcon align="center" /></IconBox>
          <IconBox $w={18}><LinesIcon align="right" /></IconBox>
          <Divider $m={2} />
          <IconBox $w={18}><IndentDecrease size={13} strokeWidth={1.2} /></IconBox>
          <IconBox $w={18}><IndentIncrease size={13} strokeWidth={1.2} /></IconBox>
          <Divider $m={2} />
          <IconBox $w={15}><MergeIcon /></IconBox>
          <FadedText>Merge &amp; Center</FadedText>
          <FadedText $ml={5}><Caret /></FadedText>
        </ToolRow>
      </GroupBody>
      <GroupLabel>Alignment</GroupLabel>
      <Launcher />
    </Group>
  );
}

function NumberGroup() {
  return (
    <Group $w={106}>
      <GroupBody $col $pt={7} $pl={2} $gap={6}>
        <ToolRow><Combo $w={102}>Number<span><Caret /></span></Combo></ToolRow>
        <ToolRow>
          <IconBox $w={18}><Banknote size={13} strokeWidth={1.2} /></IconBox>
          <Caret />
          <IconBox $w={26}><Percent size={10} strokeWidth={1.4} /></IconBox>
          <IconBox $w={12} $bold $fs={10}>,</IconBox>
          <Divider $m={5} />
          <IconBox $w={18} $fs={7}>←.0</IconBox>
          <IconBox $w={18} $fs={7}>.00</IconBox>
        </ToolRow>
      </GroupBody>
      <GroupLabel>Number</GroupLabel>
      <Launcher />
    </Group>
  );
}

function Styles() {
  return (
    <Group $w={391}>
      <GroupBody>
        <BigBtn $w={66}>
          <CondIcon />
          Conditional
          <span>Formatting <Caret /></span>
        </BigBtn>
        <BigBtn $w={44}>
          <TableIcon />
          Format as
          <span>Table <Caret /></span>
        </BigBtn>
        <Gallery>
          <StyleCell $bg="#f5f1f3" $c="#8c8c8c">Normal 2</StyleCell>
          <StyleCell $bg="#f5f1f3" $c="#8c8c8c">Normal</StyleCell>
          <StyleCell $bg="#e3dde0">Bad</StyleCell>
          <StyleCell $bg="#e3dde0" $c="#8c8c8c">Good</StyleCell>
          <StyleCell $bg="#ebe6e9" $c="#b0b0b0">Neutral</StyleCell>
          <StyleCell $bg="#f1eef0" $line="#b8b8b8" $c="#b0b0b0">Calculation</StyleCell>
        </Gallery>
        <GalleryScroll><Caret /><Caret /><Caret /></GalleryScroll>
      </GroupBody>
      <GroupLabel>Styles</GroupLabel>
    </Group>
  );
}

function Cells() {
  return (
    <Group $w={106}>
      <GroupBody>
        <BigBtn $w={38}><InsertIcon kind="insert" />Insert<span><Caret /></span></BigBtn>
        <BigBtn $w={28}><InsertIcon kind="delete" />Delete<span><Caret /></span></BigBtn>
        <BigBtn $w={38}><FormatIcon />Format<span><Caret /></span></BigBtn>
      </GroupBody>
      <GroupLabel>Cells</GroupLabel>
    </Group>
  );
}

function Editing() {
  return (
    <Group $w={148}>
      <GroupBody>
        <EditList>
          <EditRow><IconBox $c="#333"><Sigma size={14} /></IconBox>AutoSum&nbsp;&nbsp;<Caret $c="#666" /></EditRow>
          <EditRow $off><IconBox $c="#999"><ArrowDown size={12} /></IconBox>Fill <Caret /></EditRow>
          <EditRow><IconBox $c="#d9727f"><Eraser size={13} /></IconBox>Clear <Caret $c="#666" /></EditRow>
        </EditList>
        <BigBtn $w={36}>
          <SortIcon />
          Sort &amp;
          <span>Filter <Caret /></span>
        </BigBtn>
        <BigBtn $w={38} $dark>
          <FindIcon />
          Find &amp;
          <span>Select <Caret $c="#555" /></span>
        </BigBtn>
      </GroupBody>
      <GroupLabel>Editing</GroupLabel>
    </Group>
  );
}

export default function App() {
  return (
    <Page>
      <GlobalStyle />
      <TitleBar>
        <Qat>
          <QatSlot $w={14}><Save size={13} /></QatSlot>
          <QatSlot $w={15} />
          <QatSlot $w={16}><Undo2 size={14} strokeWidth={2.4} /></QatSlot>
          <QatSlot $w={12}><Caret $c="#cde0d5" /></QatSlot>
          <QatSlot $w={18} $off><Redo2 size={14} /></QatSlot>
          <QatSlot $w={10} $off><Caret $c="#cde0d5" /></QatSlot>
          <QatSlot $w={28}><Caret $c="#cde0d5" /></QatSlot>
        </Qat>
        <span>2020 Demand Forecasting FOR STUDENTS - Excel</span>
        <WindowBtns>
          <WinBtn><SquareArrowUp size={12} strokeWidth={1.4} /></WinBtn>
          <WinBtn><Minus size={12} strokeWidth={1.6} /></WinBtn>
          <WinBtn><Copy size={11} strokeWidth={1.4} /></WinBtn>
          <WinBtn><X size={14} strokeWidth={1.8} /></WinBtn>
        </WindowBtns>
      </TitleBar>
      <TabRow>
        {menuTabs.map(([name, w, on]) => <MenuTab key={name} $w={w} $on={on}>{name}</MenuTab>)}
        <TellMe><Lightbulb size={12} strokeWidth={1.2} />Tell me what you want to do...</TellMe>
        <Account>
          Sign in
          <ShareBtn><UserRoundPlus size={13} strokeWidth={1.4} />Share</ShareBtn>
        </Account>
      </TabRow>
      <Ribbon>
        <Clipboard />
        <FontGroup />
        <Alignment />
        <NumberGroup />
        <Styles />
        <Cells />
        <Editing />
        <RibbonEnd><ChevronUp size={11} /></RibbonEnd>
      </Ribbon>
      <FormulaBar>
        <NameBox>E10<Caret $c="#555" /></NameBox>
        <Dots>⋮</Dots>
        <FxBox><X size={13} strokeWidth={1.2} /><Check size={13} strokeWidth={1.2} />fx</FxBox>
        <FormulaInput><ChevronDown size={11} color="#555" /></FormulaInput>
      </FormulaBar>
      <Sheet />
      <SheetTabs>
        <TabNav><ChevronLeft size={9} color="#bbb" /><ChevronRight size={9} strokeWidth={3} color="#333" /></TabNav>
        {sheetTabs.map(([name, w, on], i) => (
          <SheetTab key={name} $w={w} $on={on} $sep={i === 0 || (!on && !sheetTabs[i - 1][2])}>{name}</SheetTab>
        ))}
        <TabTools>
          <span>...</span>
          <Plus size={13} strokeWidth={1.2} />
          <span>⋮</span>
        </TabTools>
        <HScroll>
          <HBtn><ChevronLeft size={8} strokeWidth={3} /></HBtn>
          <HThumb />
          <HBtn><ChevronRight size={8} strokeWidth={3} /></HBtn>
        </HScroll>
      </SheetTabs>
      <StatusBar>
        Ready
        <StatusRight>
          <ViewIcon><Table2 size={12} strokeWidth={1} /></ViewIcon>
          <ViewIcon><LayoutGrid size={12} strokeWidth={1} /></ViewIcon>
          <ViewIcon><Columns2 size={12} strokeWidth={1} /></ViewIcon>
          <Minus size={9} />
          <ZoomTrack />
          <Plus size={11} />
          <ZoomLabel>100 %</ZoomLabel>
        </StatusRight>
      </StatusBar>
      <Taskbar>
        <TaskSlot $w={39}><WinLogo /></TaskSlot>
        <TaskSlot><TaskView /></TaskSlot>
        <TaskSlot $open><Folder /></TaskSlot>
        <TaskSlot $open><Edge /></TaskSlot>
        <TaskSlot><Store /></TaskSlot>
        <TaskSlot><Mail /></TaskSlot>
        <TaskSlot><Sticky /></TaskSlot>
        <TaskSlot $open><Firefox /></TaskSlot>
        <TaskSlot><Vlc /></TaskSlot>
        <TaskSlot $open><ZoomApp /></TaskSlot>
        <TaskSlot $open><PdfApp /></TaskSlot>
        <TaskSlot $open><OfficeApp bg="#2b5fae" letter="W" /></TaskSlot>
        <TaskSlot $open><OfficeApp bg="#c8452a" letter="P" /></TaskSlot>
        <TaskSlot $open $active><OfficeApp bg="none" letter="X" /></TaskSlot>
        <Tray>
          <TraySlot $w={12}><ChevronUp size={13} strokeWidth={1.4} /></TraySlot>
          <TraySlot $w={28}><Mic size={15} strokeWidth={1.4} fill="#e8edf1" /></TraySlot>
          <TraySlot $w={12}><BatteryMedium size={14} strokeWidth={1.2} /></TraySlot>
          <TraySlot $w={26}><Volume2 size={14} strokeWidth={1.2} /></TraySlot>
          <TraySlot $w={16}><Monitor size={14} strokeWidth={1.2} /></TraySlot>
          <TraySlot $w={30}><PenTool size={14} strokeWidth={1.2} /></TraySlot>
          <TraySlot $w={24}><Keyboard size={18} strokeWidth={1} /></TraySlot>
          <Clock>5:43 pm<br />06/06/2020</Clock>
          <Notify>
            <MessageSquare size={15} strokeWidth={1.2} fill="#e8edf1" />
            <NotifyBadge>6</NotifyBadge>
          </Notify>
        </Tray>
      </Taskbar>
    </Page>
  );
}
